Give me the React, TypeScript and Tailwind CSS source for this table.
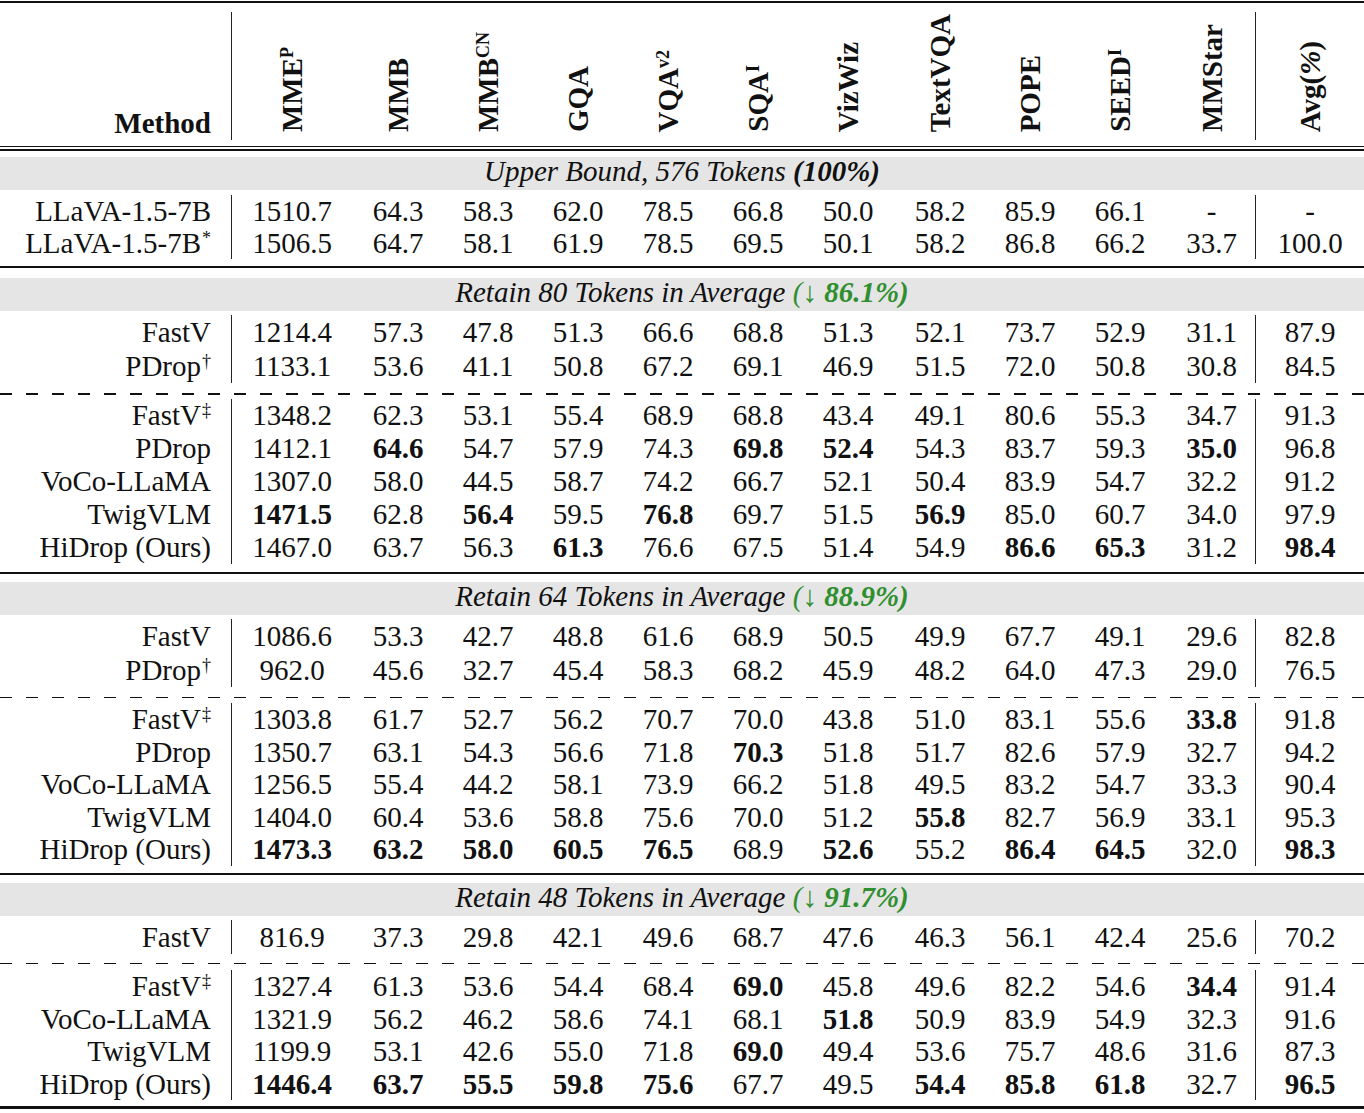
import React from "react";

// column template: method | 11 benchmarks | avg
const cols =
  "grid grid-cols-[232px_120px_92px_88px_92px_88px_92px_88px_96px_84px_96px_88px_108px]";

type Row = { m: string; s?: string; v: string };
type Group = { pad: string; h: string; rows: Row[] };
type Section = { title: React.ReactNode; mt: string; groups: Group[] };

const headers: [string, string?][] = [
  ["MME", "P"],
  ["MMB"],
  ["MMB", "CN"],
  ["GQA"],
  ["VQA", "v2"],
  ["SQA", "I"],
  ["VizWiz"],
  ["TextVQA"],
  ["POPE"],
  ["SEED", "I"],
  ["MMStar"],
];

const green = (t: string) => (
  <span className="text-[#2f8f2f]">
    (↓ <b>{t}%)</b>
  </span>
);

// "*" prefix = bold (best result)
const sections: Section[] = [
  {
    title: (
      <>
        Upper Bound, 576 Tokens <b>(100%)</b>
      </>
    ),
    mt: "mt-[6px]",
    groups: [
      {
        pad: "pt-[5px] pb-[7px]",
        h: "h-[32px] leading-[32px]",
        rows: [
          { m: "LLaVA-1.5-7B", v: "1510.7 64.3 58.3 62.0 78.5 66.8 50.0 58.2 85.9 66.1 - -" },
          { m: "LLaVA-1.5-7B", s: "*", v: "1506.5 64.7 58.1 61.9 78.5 69.5 50.1 58.2 86.8 66.2 33.7 100.0" },
        ],
      },
    ],
  },
  {
    title: <>Retain 80 Tokens in Average {green("86.1")}</>,
    mt: "mt-[10px]",
    groups: [
      {
        pad: "pt-[4px] pb-[10px]",
        h: "h-[34px] leading-[34px]",
        rows: [
          { m: "FastV", v: "1214.4 57.3 47.8 51.3 66.6 68.8 51.3 52.1 73.7 52.9 31.1 87.9" },
          { m: "PDrop", s: "†", v: "1133.1 53.6 41.1 50.8 67.2 69.1 46.9 51.5 72.0 50.8 30.8 84.5" },
        ],
      },
      {
        pad: "pt-[4px] pb-[8px]",
        h: "h-[33px] leading-[33px]",
        rows: [
          { m: "FastV", s: "‡", v: "1348.2 62.3 53.1 55.4 68.9 68.8 43.4 49.1 80.6 55.3 34.7 91.3" },
          { m: "PDrop", v: "1412.1 *64.6 54.7 57.9 74.3 *69.8 *52.4 54.3 83.7 59.3 *35.0 96.8" },
          { m: "VoCo-LLaMA", v: "1307.0 58.0 44.5 58.7 74.2 66.7 52.1 50.4 83.9 54.7 32.2 91.2" },
          { m: "TwigVLM", v: "*1471.5 62.8 *56.4 59.5 *76.8 69.7 51.5 *56.9 85.0 60.7 34.0 97.9" },
          { m: "HiDrop (Ours)", v: "1467.0 63.7 56.3 *61.3 76.6 67.5 51.4 54.9 *86.6 *65.3 31.2 *98.4" },
        ],
      },
    ],
  },
  {
    title: <>Retain 64 Tokens in Average {green("88.9")}</>,
    mt: "mt-[8px]",
    groups: [
      {
        pad: "pt-[4px] pb-[10px]",
        h: "h-[34px] leading-[34px]",
        rows: [
          { m: "FastV", v: "1086.6 53.3 42.7 48.8 61.6 68.9 50.5 49.9 67.7 49.1 29.6 82.8" },
          { m: "PDrop", s: "†", v: "962.0 45.6 32.7 45.4 58.3 68.2 45.9 48.2 64.0 47.3 29.0 76.5" },
        ],
      },
      {
        pad: "pt-[5px] pb-[7px]",
        h: "h-[32.5px] leading-[32.5px]",
        rows: [
          { m: "FastV", s: "‡", v: "1303.8 61.7 52.7 56.2 70.7 70.0 43.8 51.0 83.1 55.6 *33.8 91.8" },
          { m: "PDrop", v: "1350.7 63.1 54.3 56.6 71.8 *70.3 51.8 51.7 82.6 57.9 32.7 94.2" },
          { m: "VoCo-LLaMA", v: "1256.5 55.4 44.2 58.1 73.9 66.2 51.8 49.5 83.2 54.7 33.3 90.4" },
          { m: "TwigVLM", v: "1404.0 60.4 53.6 58.8 75.6 70.0 51.2 *55.8 82.7 56.9 33.1 95.3" },
          { m: "HiDrop (Ours)", v: "*1473.3 *63.2 *58.0 *60.5 *76.5 68.9 *52.6 55.2 *86.4 *64.5 32.0 *98.3" },
        ],
      },
    ],
  },
  {
    title: <>Retain 48 Tokens in Average {green("91.7")}</>,
    mt: "mt-[8px]",
    groups: [
      {
        pad: "pt-[4px] pb-[9px]",
        h: "h-[34px] leading-[34px]",
        rows: [{ m: "FastV", v: "816.9 37.3 29.8 42.1 49.6 68.7 47.6 46.3 56.1 42.4 25.6 70.2" }],
      },
      {
        pad: "pt-[6px] pb-[6px]",
        h: "h-[32.5px] leading-[32.5px]",
        rows: [
          { m: "FastV", s: "‡", v: "1327.4 61.3 53.6 54.4 68.4 *69.0 45.8 49.6 82.2 54.6 *34.4 91.4" },
          { m: "VoCo-LLaMA", v: "1321.9 56.2 46.2 58.6 74.1 68.1 *51.8 50.9 83.9 54.9 32.3 91.6" },
          { m: "TwigVLM", v: "1199.9 53.1 42.6 55.0 71.8 *69.0 49.4 53.6 75.7 48.6 31.6 87.3" },
          { m: "HiDrop (Ours)", v: "*1446.4 *63.7 *55.5 *59.8 *75.6 67.7 49.5 *54.4 *85.8 *61.8 32.7 *96.5" },
        ],
      },
    ],
  },
];

function Cell({ v, last }: { v: string; last?: boolean }) {
  const bold = v.startsWith("*");
  return (
    <div
      className={`text-center whitespace-nowrap ${bold ? "font-bold" : ""} ${
        last ? "border-r border-[#222]" : ""
      }`}
    >
      {bold ? v.slice(1) : v}
    </div>
  );
}

function DataRow({ row, h }: { row: Row; h: string }) {
  const vals = row.v.split(" ");
  return (
    <div className={`${cols} ${h}`}>
      <div className="text-right whitespace-nowrap pr-[20px] border-r border-[#222]">
        {row.m}
        {row.s && <sup className="text-[18px] ml-px">{row.s}</sup>}
      </div>
      {vals.map((v, i) => (
        <Cell key={i} v={v} last={i === 10} />
      ))}
    </div>
  );
}

function Dashed() {
  return (
    <div className="h-[1.5px] bg-[repeating-linear-gradient(90deg,#111_0px,#111_12px,transparent_12px,transparent_26px)]" />
  );
}

export default function App() {
  return (
    <div className="w-[1364px] bg-white text-[29px] text-[#111] font-['Liberation_Serif',serif]">
      {/* top rule */}
      <div className="mt-px h-[2px] bg-[#111]" />

      {/* header */}
      <div className={`${cols} pt-[9px] pb-[6px]`}>
        <div className="h-[128px] flex items-end justify-end pr-[20px] pb-[3px] font-bold leading-[28px] border-r border-[#222]">
          Method
        </div>
        {headers.map(([label, sup], i) => (
          <div
            key={i}
            className={`h-[128px] flex items-end justify-center pb-[8px] ${
              i === 10 ? "border-r border-[#222]" : ""
            }`}
          >
            <span className="[writing-mode:vertical-rl] rotate-180 font-bold leading-[28px] whitespace-nowrap">
              {label}
              {sup && <span className="align-[5px] text-[18px] leading-none">{sup}</span>}
            </span>
          </div>
        ))}
        <div className="h-[128px] flex items-end justify-center pb-[8px]">
          <span className="[writing-mode:vertical-rl] rotate-180 font-bold leading-[28px] whitespace-nowrap">
            Avg(<i>%</i>)
          </span>
        </div>
      </div>
      <div className="h-[5px] border-t border-b-2 border-[#111]" />

      {sections.map((sec, si) => (
        <div key={si}>
          {si > 0 && <div className="h-[2px] bg-[#111]" />}
          <div
            className={`${sec.mt} h-[33px] pb-[4px] bg-[#e5e5e5] flex items-center justify-center italic leading-none`}
          >
            <span>{sec.title}</span>
          </div>
          {sec.groups.map((g, gi) => (
            <div key={gi}>
              {gi > 0 && <Dashed />}
              <div className={g.pad}>
                {g.rows.map((r, ri) => (
                  <DataRow key={ri} row={r} h={g.h} />
                ))}
              </div>
            </div>
          ))}
        </div>
      ))}

      {/* bottom rule */}
      <div className="h-[3px] bg-[#111]" />
    </div>
  );
}
